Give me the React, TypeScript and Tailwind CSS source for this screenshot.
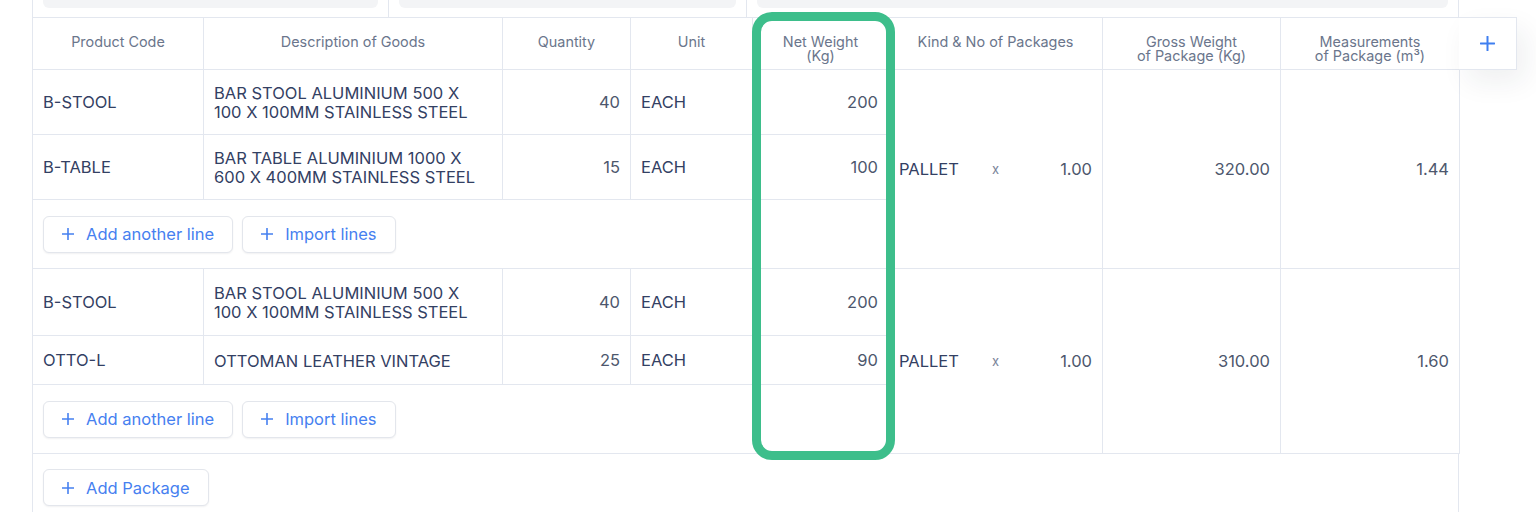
import React from "react";

const COLS = "grid grid-cols-[171px_299px_128px_122px_136px_214px_178px_179px]";

function PlusIcon({ size = 12, className = "" }: { size?: number; className?: string }) {
  return (
    <svg width={size} height={size} viewBox="0 0 12 12" className={className} fill="none">
      <path d="M6 0.5V11.5M0.5 6H11.5" stroke="currentColor" strokeWidth="1.6" strokeLinecap="round" />
    </svg>
  );
}

function Btn({ label }: { label: string }) {
  return (
    <button className="inline-flex items-center gap-3 h-[37px] px-[18px] border border-[#e3e6ec] rounded-md shadow-[0_1px_2px_rgba(16,24,40,0.06)] bg-white text-[#4680f0] text-[16.5px] leading-5">
      <PlusIcon />
      <span>{label}</span>
    </button>
  );
}

type Line = { code: string; desc: string[]; qty: number; unit: string; net: number };
type Group = { lines: Line[]; rows: string; kind: string; count: string; gross: string; meas: string };

const groups: Group[] = [
  {
    rows: "grid-rows-[65px_65px_69px]",
    lines: [
      { code: "B-STOOL", desc: ["BAR STOOL ALUMINIUM 500 X", "100 X 100MM STAINLESS STEEL"], qty: 40, unit: "EACH", net: 200 },
      { code: "B-TABLE", desc: ["BAR TABLE ALUMINIUM 1000 X", "600 X 400MM STAINLESS STEEL"], qty: 15, unit: "EACH", net: 100 },
    ],
    kind: "PALLET",
    count: "1.00",
    gross: "320.00",
    meas: "1.44",
  },
  {
    rows: "grid-rows-[67px_49px_69px]",
    lines: [
      { code: "B-STOOL", desc: ["BAR STOOL ALUMINIUM 500 X", "100 X 100MM STAINLESS STEEL"], qty: 40, unit: "EACH", net: 200 },
      { code: "OTTO-L", desc: ["OTTOMAN LEATHER VINTAGE"], qty: 25, unit: "EACH", net: 90 },
    ],
    kind: "PALLET",
    count: "1.00",
    gross: "310.00",
    meas: "1.60",
  },
];

const cell = "border-r border-b border-[#e3e7ef] px-[10px] flex items-center";

function GroupBlock({ g }: { g: Group }) {
  return (
    <div className={`${COLS} ${g.rows} border-l border-[#e3e7ef]`}>
      <div className={`${cell} col-start-6 row-start-1 row-span-3`}>
        <span className="flex-1 text-[#334063]">{g.kind}</span>
        <span className="text-[13px] text-[#7a8499]">x</span>
        <span className="flex-1 text-right text-[#4d576d]">{g.count}</span>
      </div>
      <div className={`${cell} col-start-7 row-start-1 row-span-3 justify-end text-[#4d576d]`}>{g.gross}</div>
      <div className={`${cell} col-start-8 row-start-1 row-span-3 justify-end text-[#4d576d]`}>{g.meas}</div>
      {g.lines.map((l, i) => (
        <React.Fragment key={i}>
          <div className={`${cell} text-[#334063]`}>{l.code}</div>
          <div className={`${cell} text-[#334063]`}>
            <div className="leading-[19px] pt-[2px]">
              {l.desc.map((d, j) => (
                <div key={j}>{d}</div>
              ))}
            </div>
          </div>
          <div className={`${cell} justify-end text-[#4d576d]`}>{l.qty}</div>
          <div className={`${cell} text-[#334063]`}>{l.unit}</div>
          <div className={`${cell} justify-end text-[#4d576d]`}>{l.net}</div>
        </React.Fragment>
      ))}
      <div className={`${cell} col-span-5 gap-[9px]`}>
        <Btn label="Add another line" />
        <Btn label="Import lines" />
      </div>
    </div>
  );
}

const headers: string[][] = [
  ["Product Code"],
  ["Description of Goods"],
  ["Quantity"],
  ["Unit"],
  ["Net Weight", "(Kg)"],
  ["Kind & No of Packages"],
  ["Gross Weight", "of Package (Kg)"],
  ["Measurements", "of Package (m³)"],
];

export default function App() {
  return (
    <div className="relative w-[1536px] h-[512px] overflow-hidden bg-white font-['Inter',sans-serif] text-[16.5px] leading-5">
      <div className="flex pl-[32px]">
        <div className="w-[1427px] flex flex-col">
          {/* top inputs row */}
          <div className="grid grid-cols-[356px_358px_1fr] h-[18px] border-l border-b border-[#e3e7ef]">
            {[0, 1, 2].map((i) => (
              <div key={i} className="border-r border-[#e3e7ef] px-[10px]">
                <div className="h-[8px] rounded-b-md bg-[#f3f4f6]" />
              </div>
            ))}
          </div>
          {/* header */}
          <div className={`${COLS} h-[52px] border-l border-[#e3e7ef]`}>
            {headers.map((h, i) => (
              <div
                key={i}
                className="border-r border-b border-[#e3e7ef] pt-[17px] px-1 text-center text-[14.4px] leading-[14px] text-[#6b768c]"
              >
                {h.map((t, j) => (
                  <div key={j}>{t}</div>
                ))}
              </div>
            ))}
          </div>
          {groups.map((g, i) => (
            <GroupBlock key={i} g={g} />
          ))}
          <div className="border-l border-r border-[#e3e7ef] px-[10px] pt-[15px] h-[80px]">
            <Btn label="Add Package" />
          </div>
        </div>
        <div className="mt-[17px] w-[58px] h-[53px] border-t border-r border-b border-[#e3e7ef] bg-white flex items-center justify-center text-[#3f7ff0] shadow-[8px_12px_28px_rgba(30,40,60,0.07)]">
          <PlusIcon size={15} />
        </div>
      </div>
      <div className="pointer-events-none absolute left-[752px] top-[12px] w-[143px] h-[448px] border-[9px] border-[#3dbe8b] rounded-[20px]" />
    </div>
  );
}
